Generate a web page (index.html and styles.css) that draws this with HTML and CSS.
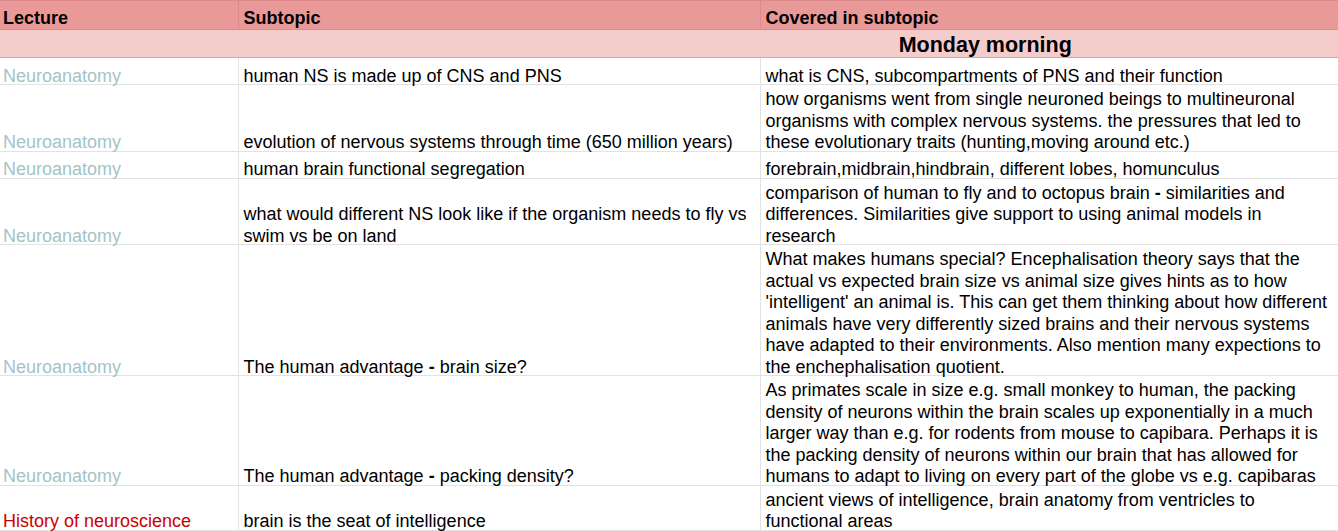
FILE: index.html
```html
<!DOCTYPE html>
<html>
<head>
<meta charset="utf-8">
<link rel="stylesheet" href="styles.css">
</head>
<body>
<table class="sheet">
  <colgroup>
    <col class="c1"><col class="c2"><col class="c3">
  </colgroup>
  <tr class="head">
    <td><div class="t">Lecture</div></td>
    <td><div class="t">Subtopic</div></td>
    <td><div class="t">Covered in subtopic</div></td>
  </tr>
  <tr class="session">
    <td class="monday" colspan="3"><div class="t">Monday morning</div></td>
  </tr>
  <tr>
    <td class="neuro"><div class="t">Neuroanatomy</div></td>
    <td><div class="t">human NS is made up of CNS and PNS</div></td>
    <td><div class="t">what is CNS, subcompartments of PNS and their function</div></td>
  </tr>
  <tr>
    <td class="neuro"><div class="t">Neuroanatomy</div></td>
    <td><div class="t">evolution of nervous systems through time (650 million years)</div></td>
    <td><div class="t">how organisms went from single neuroned beings to multineuronal organisms with complex nervous systems. the pressures that led to these evolutionary traits (hunting,moving around etc.)</div></td>
  </tr>
  <tr>
    <td class="neuro"><div class="t">Neuroanatomy</div></td>
    <td><div class="t">human brain functional segregation</div></td>
    <td><div class="t">forebrain,midbrain,hindbrain, different lobes, homunculus</div></td>
  </tr>
  <tr>
    <td class="neuro"><div class="t">Neuroanatomy</div></td>
    <td><div class="t">what would different NS look like if the organism needs to fly vs swim vs be on land</div></td>
    <td><div class="t">comparison of human to fly and to octopus brain <b>-</b> similarities and differences. Similarities give support to using animal models in research</div></td>
  </tr>
  <tr>
    <td class="neuro"><div class="t">Neuroanatomy</div></td>
    <td><div class="t">The human advantage <b>-</b> brain size?</div></td>
    <td><div class="t">What makes humans special? Encephalisation theory says that the actual vs expected brain size vs animal size gives hints as to how 'intelligent' an animal is. This can get them thinking about how different animals have very differently sized brains and their nervous systems have adapted to their environments. Also mention many expections to the enchephalisation quotient.</div></td>
  </tr>
  <tr>
    <td class="neuro"><div class="t">Neuroanatomy</div></td>
    <td><div class="t">The human advantage <b>-</b> packing density?</div></td>
    <td><div class="t">As primates scale in size e.g. small monkey to human, the packing density of neurons within the brain scales up exponentially in a much larger way than e.g. for rodents from mouse to capibara. Perhaps it is the packing density of neurons within our brain that has allowed for humans to adapt to living on every part of the globe vs e.g. capibaras</div></td>
  </tr>
  <tr>
    <td class="history"><div class="t">History of neuroscience</div></td>
    <td><div class="t">brain is the seat of intelligence</div></td>
    <td><div class="t">ancient views of intelligence, brain anatomy from ventricles to functional areas</div></td>
  </tr>
</table>
</body>
</html>
```
FILE: styles.css
```css
html, body {
  margin: 0;
  padding: 0;
  background: #ffffff;
  overflow: hidden;
}
.sheet {
  border-collapse: collapse;
  table-layout: fixed;
  width: 1339px;
  font-family: "Liberation Sans", Arial, sans-serif;
  font-size: 18px;
  line-height: 21.5px;
  color: #000000;
}
.c1 { width: 238px; }
.c2 { width: 522px; }
.c3 { width: 579px; }
.sheet td {
  border: 1px solid #e2e2e2;
  padding: 4px 4px 0 5px;
  vertical-align: bottom;
  height: 27px;
  box-sizing: border-box;
  word-wrap: break-word;
}
.sheet .t {
  margin-bottom: -3px;
}
.sheet tr > td:first-child { border-left: none; padding-left: 3px; }
.head td {
  background: #ea9999;
  font-weight: bold;
  border-color: #dc8a8c;
  height: 29px;
  padding-top: 0;
  padding-bottom: 3px;
}
.sheet tr > td.monday {
  background: #f4cccc;
  font-weight: bold;
  font-size: 21.5px;
  text-align: center;
  border-color: #dca4a6;
  padding-left: 632px;
  padding-right: 0;
  padding-top: 0;
  padding-bottom: 4px;
  height: 28px;
}
.neuro { color: #a2c4c9; }
.history { color: #cc0000; }
```
